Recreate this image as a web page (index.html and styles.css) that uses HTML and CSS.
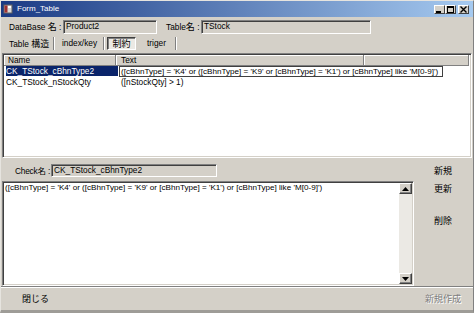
FILE: index.html
```html
<!DOCTYPE html>
<html lang="ja">
<head>
<meta charset="utf-8">
<title>Form_Table</title>
<link rel="stylesheet" href="styles.css">
</head>
<body>
<div class="window">
  <div class="titlebar">
    <svg class="appicon" width="10" height="10" viewBox="0 0 10 10">
      <rect x="1" y="1" width="8" height="8" fill="#d8d8d8" stroke="#606060" stroke-width="1"/>
      <rect x="1.5" y="1.5" width="3" height="7" fill="#a03030"/>
      <rect x="5" y="2" width="3" height="2" fill="#ffffff"/>
    </svg>
    <span class="title">Form_Table</span>
    <div class="caption-btns">
      <span class="cbtn"><svg width="9" height="7" viewBox="0 0 9 7"><rect x="1" y="5" width="5" height="2" fill="#000"/></svg></span>
      <span class="cbtn"><svg width="9" height="7" viewBox="0 0 9 7"><rect x="1.5" y="0.5" width="6" height="6" fill="none" stroke="#000"/><rect x="1" y="0" width="7" height="2" fill="#000"/></svg></span>
      <span class="cbtn cbtn-close"><svg width="9" height="7" viewBox="0 0 9 7"><path d="M1.5 0.5 L7.5 6.5 M7.5 0.5 L1.5 6.5" stroke="#000" stroke-width="1.4"/></svg></span>
    </div>
  </div>
  <div class="content">
    <div class="row1">
      <span class="lbl lbl-db">DataBase <span class="jp">名</span> :</span>
      <div class="field f-db">Product2</div>
      <span class="lbl lbl-tb">Table<span class="jp">名</span> :</span>
      <div class="field f-tb">TStock</div>
    </div>
    <div class="tabs">
      <span class="tab t1">Table <span class="jp">構造</span></span>
      <span class="sep"></span>
      <span class="tab t2">index/key</span>
      <span class="sep"></span>
      <span class="tab t3 jp">制約</span>
      <span class="tab t4">triger</span>
      <span class="sep"></span>
    </div>
    <div class="list">
      <div class="lhead">
        <div class="hc hc-name">Name</div>
        <div class="hc hc-text">Text</div>
        <div class="hc hc-extra"></div>
      </div>
      <div class="lrow lrow-first">
        <div class="cell-name selected">CK_TStock_cBhnType2</div>
        <div class="cell-edit">([cBhnType] = 'K4' or ([cBhnType] = 'K9' or [cBhnType] = 'K1') or [cBhnType] like 'M[0-9]')</div>
      </div>
      <div class="lrow">
        <div class="cell-name">CK_TStock_nStockQty</div>
        <div class="cell-text">([nStockQty] &gt; 1)</div>
      </div>
    </div>
    <div class="lower">
      <div class="lower-main">
        <div class="checkrow">
          <span class="lbl lbl-ck">Check<span class="jp">名</span> :</span>
          <div class="field f-ck">CK_TStock_cBhnType2</div>
        </div>
        <div class="memo">
          <div class="memo-text">([cBhnType] = 'K4' or ([cBhnType] = 'K9' or [cBhnType] = 'K1') or [cBhnType] like 'M[0-9]')</div>
          <div class="vscroll">
            <span class="sbtn-arrow"><svg width="7" height="4" viewBox="0 0 7 4"><path d="M3.5 0 L7 4 L0 4 Z" fill="#000"/></svg></span>
            <span class="strack"></span>
            <span class="sbtn-arrow"><svg width="7" height="4" viewBox="0 0 7 4"><path d="M0 0 L7 0 L3.5 4 Z" fill="#000"/></svg></span>
          </div>
        </div>
      </div>
      <div class="side">
        <div class="sidebtn b-new jp">新規</div>
        <div class="sidebtn b-upd jp">更新</div>
        <div class="sidebtn b-del jp">削除</div>
      </div>
    </div>
    <div class="footer">
      <span class="fbtn jp">閉じる</span>
      <span class="fbtn fbtn-disabled jp">新規作成</span>
    </div>
  </div>
</div>
</body>
</html>
```

FILE: styles.css
```css
* { box-sizing: border-box; margin: 0; padding: 0; }
html, body { width: 474px; height: 313px; overflow: hidden; }
body {
  font-family: "Liberation Sans", "Noto Sans CJK JP", sans-serif;
  font-size: 8.3px;
  color: #000;
  background: #d4d0c8;
}
.jp { font-family: "Noto Sans CJK JP", sans-serif; font-size: 9px; }

.window {
  width: 474px;
  height: 313px;
  display: flex;
  flex-direction: column;
  background: #d4d0c8;
  border-top: 1px solid #e6e4df;
  border-left: 1px solid #e6e4df;
  border-right: 1px solid #808080;
  border-bottom: 3px solid #9e9c97;
}

/* title bar */
.titlebar {
  height: 16px;
  flex: none;
  display: flex;
  align-items: center;
  background: linear-gradient(to right, #1a3a84, #a6caf0);
  color: #fff;
}
.appicon { margin-left: 2px; flex: none; }
.title { margin-left: 4px; font-size: 8px; color: #fff; line-height: 16px; }
.caption-btns { margin-left: auto; margin-right: 4px; display: flex; align-self: flex-start; margin-top: 4px; }
.cbtn {
  width: 11px; height: 9px;
  background: #d4d0c8;
  border-top: 1px solid #fff; border-left: 1px solid #fff;
  border-right: 1px solid #404040; border-bottom: 1px solid #404040;
  display: flex; align-items: center; justify-content: center;
}
.cbtn svg { display: block; }
.cbtn-close { margin-left: 2px; }

.content { flex: 1; display: flex; flex-direction: column; padding: 0 1px; }

/* sunken field */
.field {
  height: 14px;
  background: #d4d0c8;
  border-top: 1px solid #808080; border-left: 1px solid #808080;
  border-right: 1px solid #fff; border-bottom: 1px solid #fff;
  box-shadow: inset 1px 1px 0 #404040;
  padding-left: 2px;
  line-height: 11px;
  white-space: nowrap;
  overflow: hidden;
}
.lbl { white-space: nowrap; line-height: 14px; }

.row1 { margin-top: 3px; height: 14px; display: flex; align-items: center; }
.lbl-db { margin-left: 7px; width: 54px; }
.f-db { width: 94px; }
.lbl-tb { margin-left: 9px; width: 35px; }
.f-tb { width: 170px; }

/* tabs */
.tabs { margin-top: 3px; height: 13px; display: flex; align-items: center; }
.tab { line-height: 13px; height: 13px; white-space: nowrap; }
.t1 { margin-left: 7px; width: 44px; }
.t2 { width: 48px; padding-left: 7px; }
.t3 {
  margin-left: 2px; width: 29px; text-align: center;
  background: #ebe9e4;
  border-top: 1px solid #404040; border-left: 1px solid #404040;
  border-right: 1px solid #fff; border-bottom: 1px solid #fff;
  box-shadow: inset 1px 1px 0 #808080;
  line-height: 11px;
}
.t4 { margin-left: 11px; width: 28px; }
.sep { width: 2px; height: 13px; border-left: 1px solid #808080; border-right: 1px solid #fff; }

/* list */
.list {
  margin-top: 3px;
  width: 470px;
  height: 105px;
  flex: none;
  background: #fff;
  border-top: 1px solid #808080; border-left: 1px solid #808080;
  border-right: 1px solid #fff; border-bottom: 1px solid #fff;
  box-shadow: inset 1px 1px 0 #404040, inset -1px -1px 0 #d4d0c8;
  padding: 1px;
  overflow: hidden;
}
.lhead { height: 11px; display: flex; }
.hc {
  height: 11px;
  background: #d4d0c8;
  border-right: 1px solid #808080;
  border-bottom: 1px solid #808080;
  box-shadow: inset 1px 1px 0 #fff;
  line-height: 10px;
}
.hc-name { width: 112px; padding-left: 4px; }
.hc-text { width: 248px; padding-left: 5px; }
.hc-extra { width: 105px; }

.lrow { height: 10px; display: flex; white-space: nowrap; line-height: 10px; }
.lrow-first { height: 11px; }
.cell-name { margin-left: 2px; width: 112px; height: 10px; }
.selected { background: #0a246a; color: #fff; }
.cell-edit {
  margin-left: 1px; width: 324px; height: 11px;
  border: 1px solid #404040;
  padding-left: 1px;
  line-height: 9px;
  background: #fff;
  font-size: 8.1px;
  overflow: hidden;
}
.cell-text { margin-left: 1px; padding-left: 2px; }

/* lower section */
.lower { display: flex; height: 128px; flex: none; }
.lower-main { width: 412px; display: flex; flex-direction: column; }
.checkrow { margin-top: 6px; height: 13px; display: flex; align-items: center; }
.lbl-ck { margin-left: 13px; width: 36px; line-height: 13px; letter-spacing: -0.2px; }
.lbl-ck .jp { font-size: 8.5px; }
.f-ck { width: 166px; height: 13px; line-height: 10px; }

.memo {
  margin-top: 4px;
  height: 105px;
  background: #fff;
  border-top: 1px solid #808080; border-left: 1px solid #808080;
  border-right: 1px solid #fff; border-bottom: 1px solid #fff;
  box-shadow: inset 1px 1px 0 #404040, inset -1px -1px 0 #d4d0c8;
  padding: 1px;
  display: flex;
}
.memo-text { flex: 1; white-space: nowrap; overflow: hidden; line-height: 10px; padding-left: 1px; font-size: 8.1px; }
.vscroll { width: 13px; display: flex; flex-direction: column; background: #ebe9e4; }
.sbtn-arrow {
  height: 11px; flex: none;
  background: #d4d0c8;
  border-top: 1px solid #fff; border-left: 1px solid #fff;
  border-right: 1px solid #404040; border-bottom: 1px solid #404040;
  box-shadow: inset -1px -1px 0 #808080;
  display: flex; align-items: center; justify-content: center;
}
.sbtn-arrow svg { display: block; }
.strack { flex: 1; }

.side { width: 58px; display: flex; flex-direction: column; }
.sidebtn { height: 16px; line-height: 16px; text-align: center; }
.b-new { margin-top: 5px; }
.b-upd { margin-top: 2px; }
.b-del { margin-top: 16px; }

/* footer */
.footer {
  height: 24px;
  flex: none;
  border-top: 1px solid #808080;
  box-shadow: inset 0 1px 0 #fff;
  margin: 0 -1px;
  padding: 0 12px 0 21px;
  display: flex;
  align-items: center;
  justify-content: space-between;
}
.fbtn { line-height: 14px; }
.fbtn-disabled { color: #808080; text-shadow: 1px 1px 0 #fff; }
```
